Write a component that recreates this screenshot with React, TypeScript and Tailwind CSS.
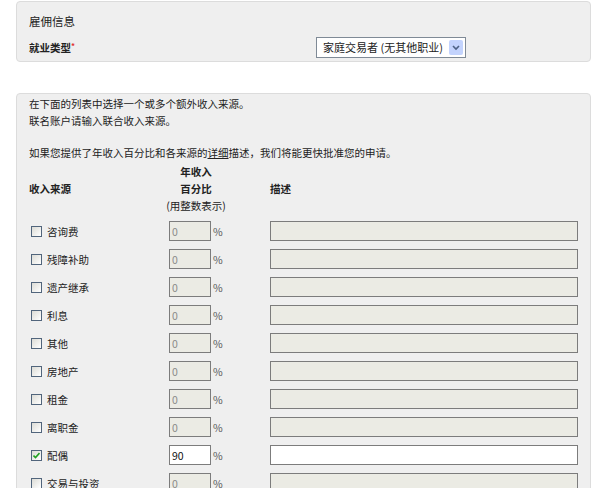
const rows = [
  { label: "咨询费", checked: false, value: "0" },
  { label: "残障补助", checked: false, value: "0" },
  { label: "遗产继承", checked: false, value: "0" },
  { label: "利息", checked: false, value: "0" },
  { label: "其他", checked: false, value: "0" },
  { label: "房地产", checked: false, value: "0" },
  { label: "租金", checked: false, value: "0" },
  { label: "离职金", checked: false, value: "0" },
  { label: "配偶", checked: true, value: "90" },
  { label: "交易与投资", checked: false, value: "0" },
];

function Checkbox({ checked }: { checked: boolean }) {
  return (
    <span className="flex h-[11px] w-[11px] items-center justify-center border border-[#51657c] bg-gradient-to-br from-[#dcdcd6] to-white">
      {checked && (
        <svg width="7" height="7" viewBox="0 0 7 7">
          <path d="M0.5 3.5 L2.5 5.5 L6.5 1" fill="none" stroke="#21a121" strokeWidth="1.6" />
        </svg>
      )}
    </span>
  );
}

export default function App() {
  return (
    <div className="min-h-screen bg-white pt-px font-['Noto_Sans_CJK_SC','Noto_Sans',sans-serif] text-[10.5px] leading-[17px] text-[#222]">
      {/* employment */}
      <section className="ml-4 w-[575px] rounded-[4px] border border-[#dcdcdc] bg-[#efefef] px-[12px] pb-[3px] pt-[11px]">
        <div className="text-[11.5px]">雇佣信息</div>
        <div className="mt-[7px] flex items-center">
          <div className="w-[287px] font-bold">
            就业类型<span className="relative -top-[3px] text-[8px] text-[#e03030]">*</span>
          </div>
          <div className="flex h-[21px] w-[150px] items-center justify-between border border-[#7f8a96] bg-white pl-[6px] pr-[2px]">
            <span className="text-[11px]">家庭交易者 (无其他职业)</span>
            <span className="flex h-[15px] w-[14px] items-center justify-center rounded-[2px] bg-[#c3d3fd]">
              <svg width="8" height="6" viewBox="0 0 8 6">
                <path d="M1 1 L4 4 L7 1" fill="none" stroke="#4d6185" strokeWidth="1.6" />
              </svg>
            </span>
          </div>
        </div>
      </section>

      {/* other income */}
      <section className="ml-4 mt-[31px] w-[575px] rounded-[4px] border border-[#dcdcdc] bg-[#efefef] px-[12px] pt-px pb-4">
        <p>在下面的列表中选择一个或多个额外收入来源。</p>
        <p>联名账户请输入联合收入来源。</p>
        <p className="mt-[15px]">
          如果您提供了年收入百分比和各来源的<span className="underline">详细</span>描述，我们将能更快批准您的申请。
        </p>

        <div className="mt-[2px] grid grid-cols-[140px_101px_308px] items-center font-bold">
          <div>收入来源</div>
          <div className="w-[54px] text-center">
            <div>年收入</div>
            <div>百分比</div>
            <div className="-mx-2 font-normal">(用整数表示)</div>
          </div>
          <div>描述</div>
        </div>

        <div className="mt-[7px] grid grid-cols-[140px_101px_308px] gap-y-2">
          {rows.map((r) => (
            <div key={r.label} className="contents">
              <div className="flex h-5 items-center gap-[5px] pl-[2px]">
                <Checkbox checked={r.checked} />
                <span>{r.label}</span>
              </div>
              <div className="flex h-5 items-center">
                <div
                  className={`flex h-5 w-[42px] items-center border border-[#7c7c7c] pl-[2px] ${
                    r.checked ? "bg-white text-[#111]" : "bg-[#ebebe4] text-[#8a8a8a]"
                  }`}
                >
                  {r.value}
                </div>
                <span className="ml-[2px] text-[#555]">%</span>
              </div>
              <div
                className={`h-5 border border-[#7c7c7c] ${r.checked ? "bg-white" : "bg-[#ebebe4]"}`}
              />
            </div>
          ))}
        </div>
      </section>
    </div>
  );
}
